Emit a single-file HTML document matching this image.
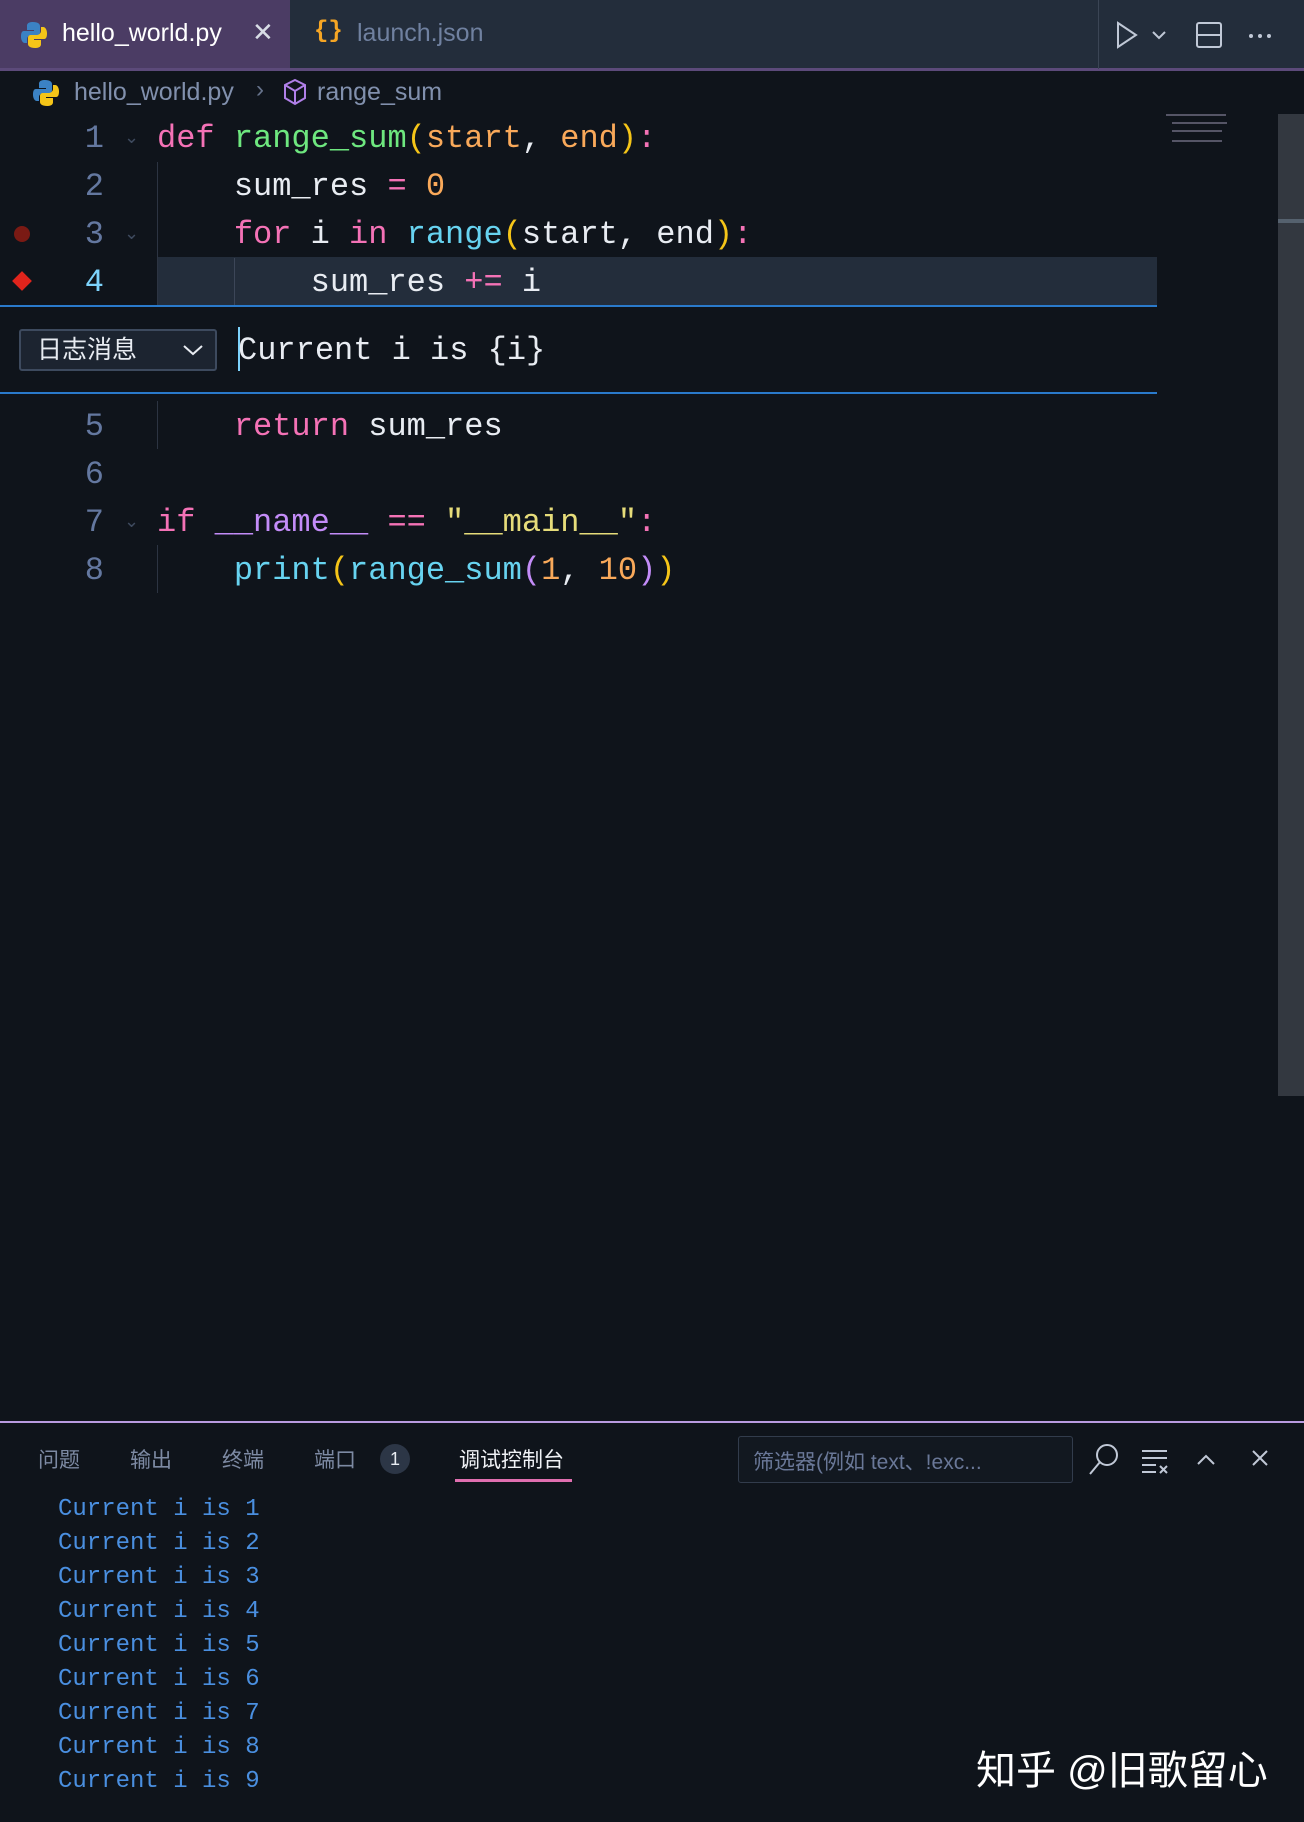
<!DOCTYPE html>
<html><head><meta charset="utf-8"><style>
*{margin:0;padding:0;box-sizing:border-box}
body{width:1304px;height:1822px;background:#0f141b;position:relative;overflow:hidden;font-family:"Liberation Sans","Noto Sans CJK SC",sans-serif}
.abs{position:absolute}
.mono{font-family:"Liberation Mono","Noto Sans CJK SC",monospace;font-size:32px;white-space:pre}
.ln{position:absolute;left:40px;width:64px;text-align:right;color:#6478a0;font-family:"Liberation Mono",monospace;font-size:32px;line-height:48px}
.code{position:absolute;left:157px;line-height:48px;color:#e8ecf2}
.k{color:#f472b6}.f{color:#6ee77f}.p{color:#f9a95a}.y{color:#f5c518}.c{color:#67d3f0}.n{color:#c38cf8}.s{color:#e6dc7a}.o{color:#f472b6}.num{color:#f9a95a}
.chev{position:absolute;left:124px;width:20px;height:48px;color:#3e4a5e;font-size:18px;line-height:48px}
.guide{position:absolute;width:1px;background:#2c3442}
.cl{position:absolute;left:58px;font-family:"Liberation Mono",monospace;font-size:24px;color:#4a8fe0;white-space:pre}
.pt{position:absolute;top:1444px;font-size:21px;color:#7d8aa3}
</style></head><body>
<div class="abs" style="left:0;top:0;width:1304px;height:69px;background:#232d3b"></div>
<div class="abs" style="left:0;top:0;width:290px;height:69px;background:#4b3c64"></div>
<div class="abs" style="left:0;top:68px;width:1304px;height:3px;background:#5c4a7a"></div>
<div class="abs" style="left:1098px;top:0;width:1px;height:69px;background:#3b4555"></div>
<svg class="abs" style="left:21px;top:21px" width="26" height="28" viewBox="0 0 26 28"><path d="M12 1c-6 0-6 3-6 4v4h7v1H3C0 10 0 14 0 16s1 6 4 6h2v-4c0-2 2-4 4-4h6c2 0 3-1 3-3V5c0-2-2-4-7-4z" fill="#3b82c4"/><path d="M14 27c6 0 6-3 6-4v-4h-7v-1h10c3 0 3-4 3-6s-1-6-4-6h-2v4c0 2-2 4-4 4h-6c-2 0-3 1-3 3v6c0 2 2 4 7 4z" fill="#f5c518"/></svg>
<div class="abs" style="left:62px;top:19px;font-size:25px;color:#ffffff">hello_world.py</div>
<div class="abs" style="left:252px;top:17px;font-size:26px;color:#d8dde6">✕</div>
<div class="abs" style="left:314px;top:18px;font-size:24px;color:#f5a524;font-family:'Liberation Mono',monospace;font-weight:bold">{}</div>
<div class="abs" style="left:357px;top:19px;font-size:25px;color:#7081a0">launch.json</div>
<svg class="abs" style="left:1115px;top:20px" width="180" height="30" viewBox="0 0 180 30"><path d="M3 3l18 12L3 27z" fill="none" stroke="#c0c8d6" stroke-width="2"/><path d="M38 12l6 6 6-6" fill="none" stroke="#c0c8d6" stroke-width="2"/><rect x="82" y="3" width="24" height="24" rx="2" fill="none" stroke="#c0c8d6" stroke-width="2"/><path d="M82 15h24" stroke="#c0c8d6" stroke-width="2"/><circle cx="136" cy="16" r="2" fill="#c0c8d6"/><circle cx="145" cy="16" r="2" fill="#c0c8d6"/><circle cx="154" cy="16" r="2" fill="#c0c8d6"/></svg>
<svg class="abs" style="left:33px;top:79px" width="26" height="28" viewBox="0 0 26 28"><path d="M12 1c-6 0-6 3-6 4v4h7v1H3C0 10 0 14 0 16s1 6 4 6h2v-4c0-2 2-4 4-4h6c2 0 3-1 3-3V5c0-2-2-4-7-4z" fill="#3b82c4"/><path d="M14 27c6 0 6-3 6-4v-4h-7v-1h10c3 0 3-4 3-6s-1-6-4-6h-2v4c0 2-2 4-4 4h-6c-2 0-3 1-3 3v6c0 2 2 4 7 4z" fill="#f5c518"/></svg>
<div class="abs" style="left:74px;top:78px;font-size:25px;color:#8190ad">hello_world.py</div>
<div class="abs" style="left:256px;top:76px;font-size:24px;color:#66738c">›</div>
<svg class="abs" style="left:282px;top:78px" width="26" height="28" viewBox="0 0 26 28"><path d="M13 2l10 5v13l-10 6-10-6V7z M3 7l10 6 10-6 M13 13v13" fill="none" stroke="#b07fe8" stroke-width="2"/></svg>
<div class="abs" style="left:317px;top:78px;font-size:25px;color:#8190ad">range_sum</div>
<div class="abs" style="left:1278px;top:114px;width:26px;height:982px;background:#333840"></div>
<div class="abs" style="left:1278px;top:219px;width:26px;height:4px;background:#55616e"></div>
<div class="abs" style="left:1166px;top:114px;width:60px;height:2px;background:#556"></div>
<div class="abs" style="left:1172px;top:122px;width:55px;height:2px;background:#556"></div>
<div class="abs" style="left:1172px;top:130px;width:50px;height:2px;background:#556"></div>
<div class="abs" style="left:1172px;top:140px;width:50px;height:2px;background:#556"></div>
<div class="abs" style="left:157px;top:257px;width:1000px;height:49px;background:#232d3b"></div>
<div class="abs" style="left:0;top:305px;width:1157px;height:2px;background:#2a7acb"></div>
<div class="abs" style="left:0;top:392px;width:1157px;height:2px;background:#2a7acb"></div>
<div class="guide" style="left:157px;top:162px;height:143px"></div>
<div class="guide" style="left:234px;top:258px;height:47px;background:#3c4658"></div>
<div class="guide" style="left:157px;top:401px;height:48px"></div>
<div class="guide" style="left:157px;top:545px;height:48px"></div>
<div class="ln" style="top:115px">1</div>
<div class="ln" style="top:163px">2</div>
<div class="ln" style="top:211px">3</div>
<div class="ln" style="top:259px;color:#7dd3fc">4</div>
<div class="ln" style="top:403px">5</div>
<div class="ln" style="top:451px">6</div>
<div class="ln" style="top:499px">7</div>
<div class="ln" style="top:547px">8</div>
<div class="chev" style="top:113px">⌄</div>
<div class="chev" style="top:209px">⌄</div>
<div class="chev" style="top:497px">⌄</div>
<div class="abs" style="left:14px;top:226px;width:16px;height:16px;border-radius:50%;background:#7a1a14"></div>
<div class="abs" style="left:15px;top:274px;width:14px;height:14px;background:#e0241c;transform:rotate(45deg)"></div>
<div class="code mono" style="top:115px"><span class="k">def</span> <span class="f">range_sum</span><span class="y">(</span><span class="p">start</span>, <span class="p">end</span><span class="y">)</span><span class="k">:</span></div>
<div class="code mono" style="top:163px">    sum_res <span class="o">=</span> <span class="num">0</span></div>
<div class="code mono" style="top:211px">    <span class="k">for</span> i <span class="k">in</span> <span class="c">range</span><span class="y">(</span>start, end<span class="y">)</span><span class="k">:</span></div>
<div class="code mono" style="top:259px">        sum_res <span class="o">+=</span> i</div>
<div class="code mono" style="top:403px">    <span class="k">return</span> sum_res</div>
<div class="code mono" style="top:499px"><span class="k">if</span> <span class="n">__name__</span> <span class="o">==</span> <span class="s">"__main__"</span><span class="k">:</span></div>
<div class="code mono" style="top:547px">    <span class="c">print</span><span class="y">(</span><span class="c">range_sum</span><span class="n">(</span><span class="num">1</span>, <span class="num">10</span><span class="n">)</span><span class="y">)</span></div>
<div class="abs" style="left:19px;top:329px;width:198px;height:42px;border:2px solid #3d4a5e;border-radius:3px;background:#1c2430"></div>
<div class="abs" style="left:37px;top:333px;font-size:25px;color:#e8ecf2;line-height:34px">日志消息</div>
<svg class="abs" style="left:182px;top:342px" width="22" height="16" viewBox="0 0 22 16"><path d="M2 4l9 8 9-8" fill="none" stroke="#e8ecf2" stroke-width="2"/></svg>
<div class="abs" style="left:238px;top:327px;width:2px;height:44px;background:#7dd3fc"></div>
<div class="abs mono" style="left:238px;top:327px;line-height:48px;color:#e8ecf2">Current i is {i}</div>
<div class="abs" style="left:0;top:1421px;width:1304px;height:2px;background:#b99be0"></div>
<div class="pt" style="left:38px">问题</div>
<div class="pt" style="left:130px">输出</div>
<div class="pt" style="left:222px">终端</div>
<div class="pt" style="left:314px">端口</div>
<div class="abs" style="left:380px;top:1444px;width:30px;height:30px;border-radius:50%;background:#2c3646;color:#e8ecf2;font-size:18px;text-align:center;line-height:30px">1</div>
<div class="pt" style="left:459px;color:#f0f2f6">调试控制台</div>
<div class="abs" style="left:455px;top:1479px;width:117px;height:3px;background:#e06fb0"></div>
<div class="abs" style="left:738px;top:1436px;width:335px;height:47px;border:1px solid #323c4c;border-radius:3px;background:#121820"></div>
<div class="abs" style="left:753px;top:1446px;font-size:21px;color:#6a7898">筛选器(例如 text、!exc...</div>
<svg class="abs" style="left:1086px;top:1440px" width="200" height="40" viewBox="0 0 200 40"><circle cx="21" cy="15" r="10" fill="none" stroke="#c0c8d6" stroke-width="2"/><path d="M14 22L4 34" stroke="#c0c8d6" stroke-width="2"/><path d="M56 11h25M56 18h25M56 25h14M56 32h14" stroke="#c0c8d6" stroke-width="2"/><path d="M74 26l7 7M81 26l-7 7" stroke="#c0c8d6" stroke-width="2"/><path d="M112 24l8-8 8 8" fill="none" stroke="#c0c8d6" stroke-width="2"/><path d="M167 11l14 14M181 11l-14 14" stroke="#c0c8d6" stroke-width="2"/></svg>
<div class="cl" style="top:1496px">Current i is 1</div>
<div class="cl" style="top:1530px">Current i is 2</div>
<div class="cl" style="top:1564px">Current i is 3</div>
<div class="cl" style="top:1598px">Current i is 4</div>
<div class="cl" style="top:1632px">Current i is 5</div>
<div class="cl" style="top:1666px">Current i is 6</div>
<div class="cl" style="top:1700px">Current i is 7</div>
<div class="cl" style="top:1734px">Current i is 8</div>
<div class="cl" style="top:1768px">Current i is 9</div>
<div class="abs" style="left:976px;top:1738px;font-size:40px;color:#ffffff;white-space:nowrap">知乎 @旧歌留心</div>
</body></html>
